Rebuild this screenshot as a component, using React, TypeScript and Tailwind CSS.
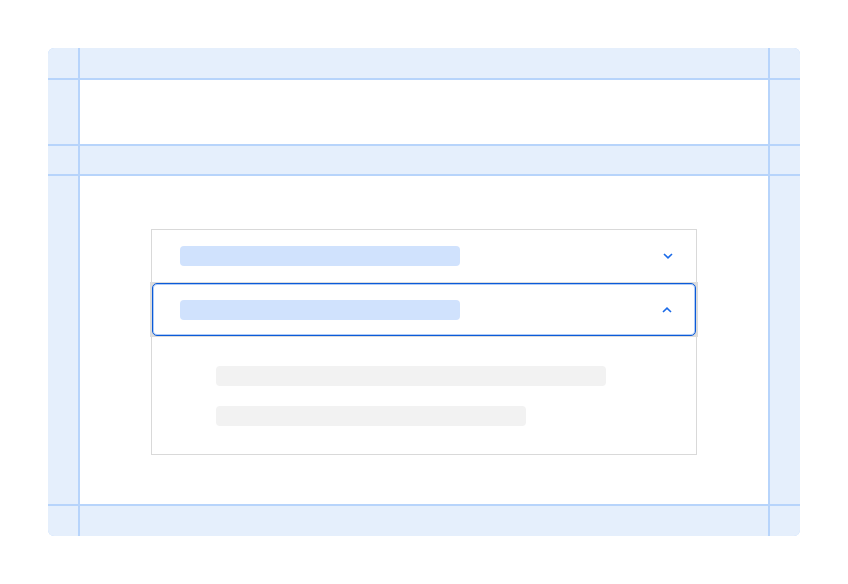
import React from "react";

function Chevron({ up }: { up?: boolean }) {
  return (
    <svg width="10" height="6" viewBox="0 0 10 6" fill="none" className="shrink-0">
      <path
        d={up ? "M1 5 L5 1.2 L9 5" : "M1 1 L5 4.8 L9 1"}
        stroke="#1a6ae8"
        strokeWidth="1.6"
      />
    </svg>
  );
}

function SkeletonAccordion() {
  return (
    <div className="w-[546px] h-[226px] border border-[#d9d9d9] bg-white">
      {/* item 1, collapsed */}
      <div className="h-[52px] flex items-center justify-between pl-[28px] pr-[23px]">
        <div className="h-5 w-[280px] rounded-[4px] bg-[#d0e2fd]" />
        <Chevron />
      </div>

      {/* item 2, focused + open */}
      <div className="-mx-[2px] bg-[#dcdcdc] px-[2px] py-px">
        <div className="h-[53px] flex items-center justify-between rounded-[5px] border border-[#0b5bd8] shadow-[inset_0_0_0_1px_rgba(26,106,232,0.35)] bg-white pl-[27px] pr-[23px]">
          <div className="h-5 w-[280px] rounded-[4px] bg-[#d0e2fd]" />
          <Chevron up />
        </div>
      </div>
      <div className="h-[117px] flex flex-col gap-5 pl-[64px] pt-[29px]">
        <div className="h-5 w-[390px] rounded-[4px] bg-[#f2f2f2]" />
        <div className="h-5 w-[310px] rounded-[4px] bg-[#f2f2f2]" />
      </div>
    </div>
  );
}

export default function App() {
  return (
    <div className="w-[848px] h-[584px] bg-white flex items-center justify-center">
      <div className="grid grid-cols-[30px_688px_30px] grid-rows-[30px_64px_28px_328px_30px] gap-[2px] bg-[#b7d4fb] rounded-[6px] overflow-hidden">
        <div className="bg-[#e5effc]" />
        <div className="bg-[#e5effc]" />
        <div className="bg-[#e5effc]" />

        <div className="bg-[#e5effc]" />
        <div className="bg-white" />
        <div className="bg-[#e5effc]" />

        <div className="bg-[#e5effc]" />
        <div className="bg-[#e5effc]" />
        <div className="bg-[#e5effc]" />

        <div className="bg-[#e5effc]" />
        <div className="bg-white flex items-start justify-center pt-[53px]">
          <SkeletonAccordion />
        </div>
        <div className="bg-[#e5effc]" />

        <div className="bg-[#e5effc]" />
        <div className="bg-[#e5effc]" />
        <div className="bg-[#e5effc]" />
      </div>
    </div>
  );
}
